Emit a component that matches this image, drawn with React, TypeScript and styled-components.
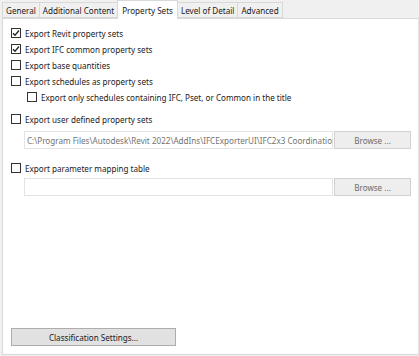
import React, { useState } from 'react'
import styled, { createGlobalStyle } from 'styled-components'

const GlobalStyle = createGlobalStyle`
  html, body {
    margin: 0;
    padding: 0;
    background: #f0f0f0;
  }
  body {
    font-family: "Noto Sans", "Open Sans", sans-serif;
    font-size: 8.1px;
    color: #1b1b1b;
  }
`

const Window = styled.div`
  width: 419px;
  height: 356px;
  background: #f0f0f0;
  display: flex;
  flex-direction: column;
  padding-left: 2px;
  box-sizing: border-box;
`

const TabStrip = styled.div`
  height: 18px;
  display: flex;
  align-items: flex-end;
  position: relative;
  z-index: 1;
`

const Tab = styled.div<{ $active?: boolean }>`
  box-sizing: border-box;
  height: ${p => (p.$active ? '19px' : '16px')};
  margin-bottom: ${p => (p.$active ? '-1px' : '0')};
  margin-left: -1px;
  padding: 0 ${p => (p.$active ? '4px' : '3px')};
  display: flex;
  align-items: center;
  background: ${p => (p.$active ? '#ffffff' : '#f0f0f0')};
  border: 1px solid #d9d9d9;
  border-bottom: ${p => (p.$active ? 'none' : '1px solid #d9d9d9')};
  white-space: nowrap;
  cursor: default;
  &:first-child {
    margin-left: 0;
  }
`

const Panel = styled.div`
  flex: 1;
  background: #ffffff;
  border: 1px solid #d9d9d9;
  border-right-color: #e3e3e3;
  margin-bottom: 1px;
  display: flex;
  flex-direction: column;
  padding: 6px 0 8px 8px;
`

const Row = styled.label<{ $indent?: boolean; $gap?: number }>`
  height: 16px;
  display: flex;
  align-items: center;
  gap: 4px;
  padding-left: ${p => (p.$indent ? '16px' : '0')};
  margin-top: ${p => p.$gap ?? 0}px;
  white-space: nowrap;
  cursor: default;
`

const Box = styled.span`
  box-sizing: border-box;
  width: 10px;
  height: 10px;
  border: 1px solid #333333;
  background: #ffffff;
  display: flex;
  align-items: center;
  justify-content: center;
  flex-shrink: 0;
`

const FieldRow = styled.div<{ $gap?: number }>`
  display: flex;
  margin-top: ${p => p.$gap ?? 0}px;
  margin-left: 13px;
  width: 387px;
  height: 18px;
`

const PathField = styled.div`
  flex: 1;
  min-width: 0;
  box-sizing: border-box;
  border: 1px solid #e3e3e3;
  color: #737373;
  padding: 0 2px;
  display: flex;
  align-items: center;
  overflow: hidden;
  white-space: nowrap;
`

const BrowseButton = styled.div`
  width: 77px;
  flex-shrink: 0;
  box-sizing: border-box;
  margin-left: 1px;
  background: #eeeeee;
  border: 1px solid #d0d0d0;
  color: #6d6d6d;
  display: flex;
  align-items: center;
  justify-content: center;
`

const ClassButton = styled.div`
  margin-top: auto;
  width: 165px;
  height: 18px;
  box-sizing: border-box;
  background: #e1e1e1;
  border: 1px solid #adadad;
  display: flex;
  align-items: center;
  justify-content: center;
`

const Check = () => (
  <svg width="8" height="8" viewBox="0 0 8 8">
    <path d="M1 4.2 L3 6.2 L7 1.5" fill="none" stroke="#222" strokeWidth="1.3" />
  </svg>
)

const tabs = ['General', 'Additional Content', 'Property Sets', 'Level of Detail', 'Advanced']

export default function App() {
  const [checks, setChecks] = useState({
    revit: true,
    ifc: true,
    base: false,
    schedules: false,
    onlyIfc: false,
    user: false,
    mapping: false,
  })
  const toggle = (k: keyof typeof checks) => setChecks({ ...checks, [k]: !checks[k] })

  const item = (k: keyof typeof checks, text: string, extra: { $indent?: boolean; $gap?: number } = {}) => (
    <Row {...extra} onClick={() => toggle(k)}>
      <Box>{checks[k] && <Check />}</Box>
      <span>{text}</span>
    </Row>
  )

  return (
    <>
      <GlobalStyle />
      <Window>
        <TabStrip>
          {tabs.map(t => (
            <Tab key={t} $active={t === 'Property Sets'}>{t}</Tab>
          ))}
        </TabStrip>
        <Panel>
          {item('revit', 'Export Revit property sets')}
          {item('ifc', 'Export IFC common property sets')}
          {item('base', 'Export base quantities')}
          {item('schedules', 'Export schedules as property sets')}
          {item('onlyIfc', 'Export only schedules containing IFC, Pset, or Common in the title', { $indent: true })}
          {item('user', 'Export user defined property sets', { $gap: 6 })}
          <FieldRow $gap={4}>
            <PathField>C:\Program Files\Autodesk\Revit 2022\AddIns\IFCExporterUI\IFC2x3 Coordination View 2.0 Property Sets.txt</PathField>
            <BrowseButton>Browse ...</BrowseButton>
          </FieldRow>
          {item('mapping', 'Export parameter mapping table', { $gap: 11 })}
          <FieldRow $gap={2}>
            <PathField />
            <BrowseButton>Browse ...</BrowseButton>
          </FieldRow>
          <ClassButton>Classification Settings...</ClassButton>
        </Panel>
      </Window>
    </>
  )
}
